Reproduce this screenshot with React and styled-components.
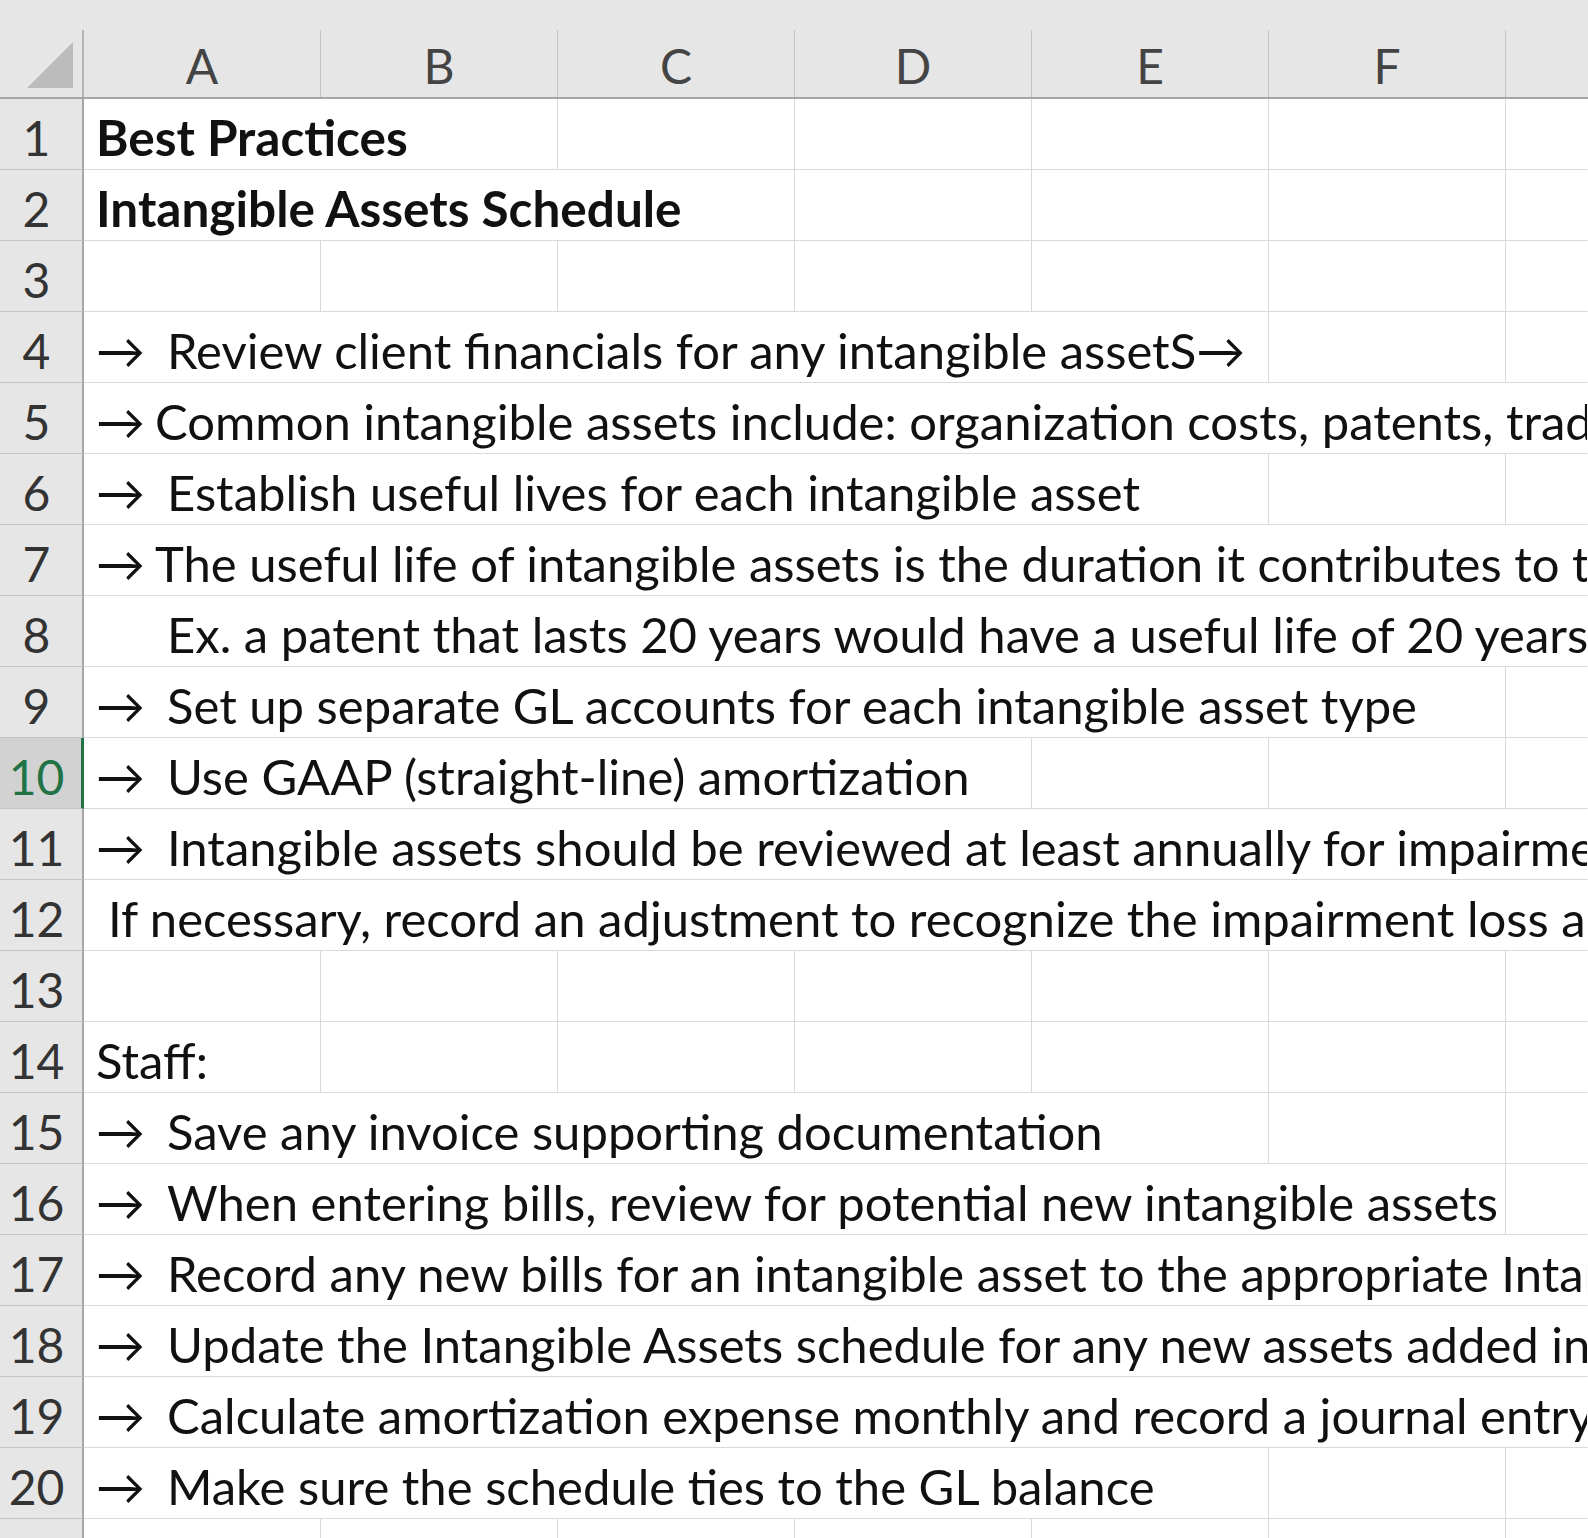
import React from 'react';
import styled, { createGlobalStyle } from 'styled-components';

const COL_W = 237;
const HEAD_W = 84;
const COLS = ['A', 'B', 'C', 'D', 'E', 'F', 'G'];

const GlobalStyle = createGlobalStyle`
  html, body {
    margin: 0;
    padding: 0;
    background: #fff;
  }
  body {
    font-family: Lato, "Liberation Sans", sans-serif;
    overflow: hidden;
  }
`;

const Sheet = styled.div`
  width: 1588px;
  height: 1538px;
  overflow: hidden;
  background: #fff;
`;

const Grid = styled.div`
  display: grid;
  grid-template-columns: ${HEAD_W}px repeat(6, ${COL_W}px) 1fr;
`;

const HeaderRow = styled(Grid)`
  height: 99px;
  box-sizing: border-box;
  background: #e6e6e6;
  border-bottom: 2px solid #a6a6a6;
  align-items: end;
`;

const Corner = styled.div`
  height: 67px;
  box-sizing: border-box;
  border-right: 2px solid #b4b4b4;
  display: flex;
  align-items: flex-end;
  justify-content: flex-end;
  padding: 0 9px 9px 0;
`;

const ColHead = styled.div`
  height: 67px;
  box-sizing: border-box;
  border-right: 1px solid ${p => (p.last ? 'transparent' : '#c4c4c4')};
  display: flex;
  justify-content: center;
  font-size: 48px;
  line-height: 72px;
  color: #444;
`;

const Row = styled(Grid)`
  height: 71px;
`;

const RowHead = styled.div`
  box-sizing: border-box;
  background: ${p => (p.selected ? '#d2d2d2' : '#e6e6e6')};
  color: ${p => (p.selected ? '#217346' : '#333')};
  border-right: ${p => (p.selected ? '3px solid #217346' : '2px solid #a6a6a6')};
  border-bottom: 1px solid #c4c4c4;
  font-size: 48px;
  line-height: 77px;
  height: 71px;
  overflow: hidden;
  text-align: center;
  padding-right: ${p => (p.selected ? 8 : 9)}px;
`;

const Cell = styled.div`
  box-sizing: border-box;
  grid-column: span ${p => p.span || 1};
  height: 71px;
  border-bottom: 1px solid #d9d9d9;
  border-right: 1px solid ${p => (p.open ? 'transparent' : '#d9d9d9')};
  padding: 3px 0 0 ${p => p.pad || 12}px;
  white-space: pre;
  overflow: hidden;
  font-size: ${p => (p.bold ? 49.5 : 49)}px;
  line-height: 71px;
  font-weight: ${p => (p.bold ? 700 : 400)};
  color: #111;
`;

const Arrow = styled.span`
  display: inline-block;
  width: ${p => (p.gap === 2 ? 71 : 59)}px;
`;

const rows = [
  { text: 'Best Practices', bold: true, span: 2 },
  { text: 'Intangible Assets Schedule', bold: true, span: 3 },
  {},
  { arrow: 2, text: 'Review client financials for any intangible assetS\u2192', span: 5 },
  { arrow: 1, text: 'Common intangible assets include: organization costs, patents, trade', span: 7 },
  { arrow: 2, text: 'Establish useful lives for each intangible asset', span: 5 },
  { arrow: 1, text: 'The useful life of intangible assets is the duration it contributes to the', span: 7 },
  { pad: 83, text: 'Ex. a patent that lasts 20 years would have a useful life of 20 years', span: 7 },
  { arrow: 2, text: 'Set up separate GL accounts for each intangible asset type', span: 6 },
  { arrow: 2, text: 'Use GAAP (straight-line) amortization', span: 4, selected: true },
  { arrow: 2, text: 'Intangible assets should be reviewed at least annually for impairment', span: 7 },
  { pad: 24, text: 'If necessary, record an adjustment to recognize the impairment loss and', span: 7 },
  {},
  { text: 'Staff:', span: 1 },
  { arrow: 2, text: 'Save any invoice supporting documentation', span: 5 },
  { arrow: 2, text: 'When entering bills, review for potential new intangible assets', span: 6 },
  { arrow: 2, text: 'Record any new bills for an intangible asset to the appropriate Intangible', span: 7 },
  { arrow: 2, text: 'Update the Intangible Assets schedule for any new assets added in', span: 7 },
  { arrow: 2, text: 'Calculate amortization expense monthly and record a journal entry', span: 7 },
  { arrow: 2, text: 'Make sure the schedule ties to the GL balance', span: 5 },
  {},
];

function SheetRow({ index, row }) {
  const span = row.text ? row.span : 0;
  const empties = COLS.length - span;
  return (
    <Row>
      <RowHead selected={row.selected}>{index + 1}</RowHead>
      {row.text && (
        <Cell span={span} bold={row.bold} pad={row.pad} open={span === COLS.length}>
          {row.arrow && <Arrow gap={row.arrow}>{'\u2192'}</Arrow>}
          {row.text}
        </Cell>
      )}
      {Array.from({ length: empties }, (_, i) => (
        <Cell key={i} open={span + i === COLS.length - 1} />
      ))}
    </Row>
  );
}

export default function App() {
  return (
    <Sheet>
      <GlobalStyle />
      <HeaderRow>
        <Corner>
          <svg width="46" height="46" viewBox="0 0 46 46">
            <polygon points="0,46 46,46 46,0" fill="#bcbcbc" />
          </svg>
        </Corner>
        {COLS.map((c, i) => (
          <ColHead key={c} last={i === COLS.length - 1}>{c === 'G' ? '' : c}</ColHead>
        ))}
      </HeaderRow>
      {rows.map((row, i) => (
        <SheetRow key={i} index={i} row={row} />
      ))}
    </Sheet>
  );
}
